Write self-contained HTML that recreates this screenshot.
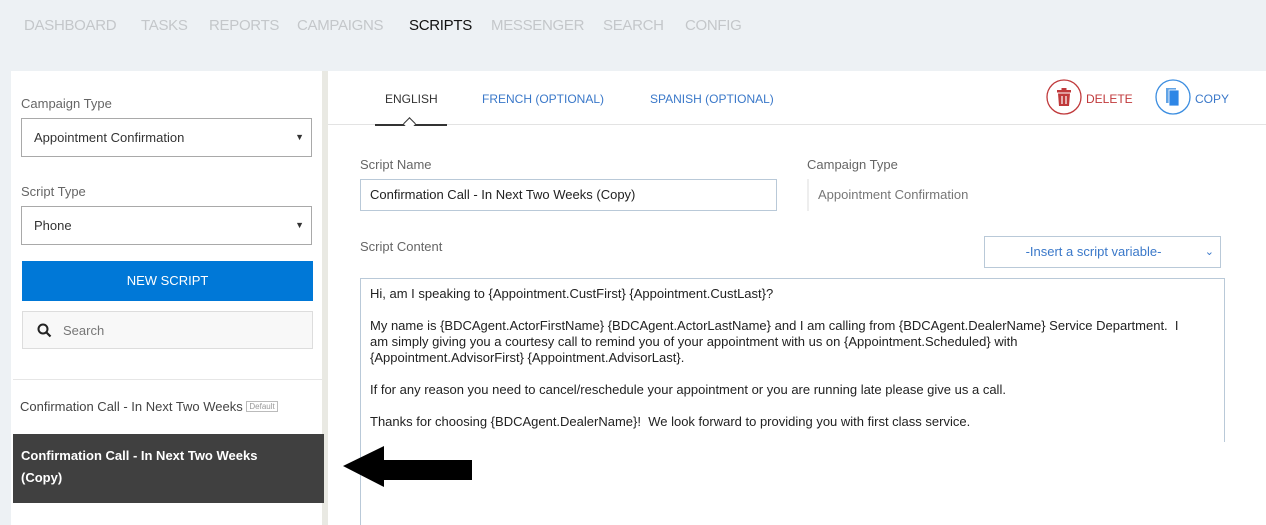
<!DOCTYPE html>
<html><head><meta charset="utf-8"><style>
*{box-sizing:border-box;margin:0;padding:0}
body{width:1266px;height:525px;overflow:hidden;background:#edf1f4;font-family:"Liberation Sans",sans-serif;position:relative;color:#333}
.a{position:absolute;white-space:nowrap}
.nav{top:17px;font-size:15px;color:#c4c7ca;letter-spacing:-0.3px}
.lbl{font-size:13px;color:#666}
.sel{border:1px solid #a9a9a9;background:#fff;font-size:13px;color:#333;padding-left:12px}
.ta{font-size:13px;color:#222;line-height:16px}
</style></head><body>
<div class="a nav" style="left:24px">DASHBOARD</div>
<div class="a nav" style="left:141px">TASKS</div>
<div class="a nav" style="left:209px">REPORTS</div>
<div class="a nav" style="left:297px">CAMPAIGNS</div>
<div class="a nav" style="left:409px;color:#111">SCRIPTS</div>
<div class="a nav" style="left:491px">MESSENGER</div>
<div class="a nav" style="left:603px">SEARCH</div>
<div class="a nav" style="left:685px">CONFIG</div>

<!-- left panel -->
<div class="a" style="left:11px;top:71px;width:311px;height:454px;background:#fff"></div>
<div class="a" style="left:322px;top:71px;width:6px;height:454px;background:#e9e9e3"></div>
<div class="a lbl" style="left:21px;top:96px">Campaign Type</div>
<div class="a sel" style="left:21px;top:118px;width:291px;height:39px;line-height:37px">Appointment Confirmation<span style="position:absolute;right:7px;font-size:9px">▼</span></div>
<div class="a lbl" style="left:21px;top:184px">Script Type</div>
<div class="a sel" style="left:21px;top:206px;width:291px;height:39px;line-height:37px">Phone<span style="position:absolute;right:7px;font-size:9px">▼</span></div>
<div class="a" style="left:22px;top:261px;width:291px;height:40px;background:#0078d7;color:#fff;font-size:13px;text-align:center;line-height:40px">NEW SCRIPT</div>
<div class="a" style="left:22px;top:311px;width:291px;height:38px;background:#f8f8f8;border:1px solid #ddd"></div>
<svg class="a" style="left:37px;top:323px" width="15" height="15" viewBox="0 0 15 15"><circle cx="6" cy="6" r="4.5" fill="none" stroke="#222" stroke-width="2"/><path d="M9.5 9.5L13.5 13.5" stroke="#222" stroke-width="2.2"/></svg>
<div class="a" style="left:63px;top:323px;font-size:13px;color:#777">Search</div>
<div class="a" style="left:13px;top:379px;width:309px;height:1px;background:#e6e6e6"></div>
<div class="a" style="left:20px;top:399px;font-size:13px;color:#444">Confirmation Call - In Next Two Weeks <span style="font-size:8px;color:#999;border:1px solid #bbb;padding:0 2px;position:relative;top:-2px">Default</span></div>
<div class="a" style="left:13px;top:434px;width:311px;height:69px;background:#404040;color:#fff;font-weight:bold;font-size:13px;line-height:22px;padding:11px 0 0 8px;white-space:normal">Confirmation Call - In Next Two Weeks<br>(Copy)</div>

<!-- right panel -->
<div class="a" style="left:328px;top:71px;width:938px;height:454px;background:#fff"></div>
<div class="a" style="left:328px;top:124px;width:938px;height:1px;background:#e3e3e3"></div>
<div class="a" style="left:385px;top:92px;font-size:12px;color:#333">ENGLISH</div>
<div class="a" style="left:375px;top:124px;width:72px;height:2px;background:#333"></div>
<div class="a" style="left:405px;top:119px;width:9px;height:9px;background:#fff;border-left:1px solid #333;border-top:1px solid #333;transform:rotate(45deg)"></div>
<div class="a" style="left:482px;top:92px;font-size:12px;color:#3a78c9">FRENCH (OPTIONAL)</div>
<div class="a" style="left:650px;top:92px;font-size:12px;color:#3a78c9">SPANISH (OPTIONAL)</div>
<svg class="a" style="left:1046px;top:79px" width="36" height="36" viewBox="0 0 36 36"><circle cx="18" cy="18" r="17" fill="none" stroke="#c0393b" stroke-width="1.3"/><rect x="11" y="11" width="14" height="2.5" fill="#c0393b"/><rect x="15.5" y="9" width="5" height="2.5" fill="#c0393b"/><path d="M12 14.5H24L23 27H13Z" fill="#c0393b"/><path d="M16 17V25M20 17V25" stroke="#fff" stroke-width="1.2"/></svg>
<div class="a" style="left:1086px;top:92px;font-size:12px;color:#c0393b">DELETE</div>
<svg class="a" style="left:1155px;top:79px" width="36" height="36" viewBox="0 0 36 36"><circle cx="18" cy="18" r="17" fill="none" stroke="#3b8de0" stroke-width="1.3"/><rect x="11" y="9" width="10" height="15" fill="#3b8de0" opacity=".8"/><rect x="14" y="11" width="10" height="16" fill="#2e86e6" stroke="#fff" stroke-width=".8"/></svg>
<div class="a" style="left:1195px;top:92px;font-size:12px;color:#3a78c9">COPY</div>

<div class="a lbl" style="left:360px;top:157px">Script Name</div>
<div class="a" style="left:360px;top:179px;width:417px;height:32px;border:1px solid #b9c9d8;font-size:13px;color:#222;line-height:30px;padding-left:9px">Confirmation Call - In Next Two Weeks (Copy)</div>
<div class="a lbl" style="left:807px;top:157px">Campaign Type</div>
<div class="a" style="left:807px;top:179px;width:2px;height:32px;background:#eee"></div>
<div class="a" style="left:818px;top:187px;font-size:13px;color:#777">Appointment Confirmation</div>
<div class="a lbl" style="left:360px;top:239px">Script Content</div>
<div class="a" style="left:984px;top:236px;width:237px;height:32px;border:1px solid #b9c9d8;color:#3a78c9;font-size:13px;line-height:30px;text-align:center;padding-right:18px">-Insert a script variable-<span style="position:absolute;right:6px;top:0;font-size:11px">⌄</span></div>
<div class="a" style="left:360px;top:278px;width:865px;height:164px;border:1px solid #b9c9d8;border-bottom:none"></div>
<div class="a" style="left:360px;top:440px;width:1px;height:85px;background:#b9c9d8"></div>
<div class="a ta" style="left:370px;top:286px">Hi, am I speaking to {Appointment.CustFirst} {Appointment.CustLast}?<br><br>My name is {BDCAgent.ActorFirstName} {BDCAgent.ActorLastName} and I am calling from {BDCAgent.DealerName} Service Department.&nbsp; I<br>am simply giving you a courtesy call to remind you of your appointment with us on {Appointment.Scheduled} with<br>{Appointment.AdvisorFirst} {Appointment.AdvisorLast}.<br><br>If for any reason you need to cancel/reschedule your appointment or you are running late please give us a call.<br><br>Thanks for choosing {BDCAgent.DealerName}!&nbsp; We look forward to providing you with first class service.</div>

<!-- arrow -->
<svg class="a" style="left:340px;top:443px" width="135" height="46" viewBox="0 0 135 46"><path d="M3 23L44 3V17H132V37H44V44Z" fill="#000"/></svg>
</body></html>
